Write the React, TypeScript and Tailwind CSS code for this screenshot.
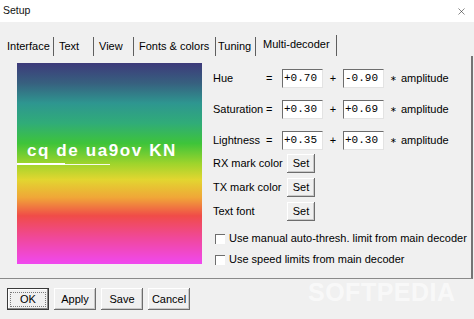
import { X } from "lucide-react";

const tabs = [
  { label: "Interface", w: "w-[50px]", pl: "pl-[3px]" },
  { label: "Text", w: "w-[40px]", pl: "pl-[5px]" },
  { label: "View", w: "w-[40px]", pl: "pl-[5px]" },
  { label: "Fonts & colors", w: "w-[82px]", pl: "pl-[5px]" },
  { label: "Tuning", w: "w-[40px]", pl: "pl-[2px]" },
];

const hsl = [
  { label: "Hue", a: "+0.70", b: "-0.90", mt: "" },
  { label: "Saturation", a: "+0.30", b: "+0.69", mt: "mt-[12px]" },
  { label: "Lightness", a: "+0.35", b: "+0.30", mt: "mt-[12px]" },
];

const colorRows = [
  { label: "RX mark color", mt: "mt-[4px]" },
  { label: "TX mark color", mt: "mt-[5px]" },
  { label: "Text font", mt: "mt-[5px]" },
];

function Field({ value }: { value: string }) {
  return (
    <div className="w-[41px] h-[19px] bg-white border-t border-l border-t-[#6d6d6d] border-l-[#6d6d6d] border-r border-b border-r-[#e3e3e3] border-b-[#e3e3e3] flex items-center pl-[1px] font-['Liberation_Mono',monospace] text-[11px]">
      {value}
    </div>
  );
}

function Btn({ label, w, h, focus }: { label: string; w: string; h: string; focus?: boolean }) {
  return (
    <button
      className={`${w} ${h} flex items-center justify-center bg-[#f0f0f0] ${
        focus
          ? "border border-[#3a3a3a] shadow-[inset_-1px_-1px_#8a8a8a,inset_1px_1px_#fff]"
          : "shadow-[inset_-1px_-1px_#6d6d6d,inset_1px_1px_#fff,inset_-2px_-2px_#c8c8c8]"
      }`}
    >
      {focus ? (
        <span className="border border-dotted border-[#7a7a7a] px-[9px] leading-[13px]">{label}</span>
      ) : (
        label
      )}
    </button>
  );
}

export default function App() {
  return (
    <div className="relative w-[474px] h-[319px] overflow-hidden bg-[#f0f0f0] flex flex-col font-['Liberation_Sans',Arial,sans-serif] text-[11px] text-black">
      <div className="h-[22px] bg-white flex items-center justify-between pl-[3px] pr-[7px]">
        <span className="text-[10.5px] text-[#111]">Setup</span>
        <X size={11} strokeWidth={1.2} className="text-[#222]" />
      </div>

      <div className="mt-[13px] h-[21px] flex items-end pl-[4px]">
        {tabs.map((t) => (
          <div key={t.label} className={`${t.w} ${t.pl} h-[19px] flex items-center border-r border-r-[#5e5e5e]`}>
            {t.label}
          </div>
        ))}
        <div className="w-[81px] h-[21px] pl-[7px] pb-[2px] flex items-center border-r border-r-[#5e5e5e]">
          Multi-decoder
        </div>
      </div>

      <div className="w-[473px] h-[223px] flex pl-[17px] pt-[7px] border-r-2 border-r-[#747474] border-b border-b-[#8a8a8a]">
        <div className="w-[185px] h-[201px] flex flex-col bg-[linear-gradient(to_bottom,#3d3a7a_0%,#37607f_10%,#2e9690_20%,#30ac78_30%,#3ec43a_40%,#9ed42c_50%,#e2d630_58%,#f0a638_67%,#f04c48_76%,#f0489a_87%,#f048f0_100%)]">
          <div className="mt-[78px] pl-[10px] h-[20px] leading-[20px] font-bold text-[17px] tracking-[1.6px] text-white">
            cq de ua9ov KN
          </div>
          <div className="mt-[2px] flex items-center">
            <div className="w-[48px] h-[2px] bg-white" />
            <div className="w-[45px] h-[1px] bg-white/90" />
          </div>
        </div>

        <div className="ml-[11px] pt-[6px] flex flex-col">
          {hsl.map((r) => (
            <div key={r.label} className={`${r.mt} h-[19px] flex items-center`}>
              <span className="w-[53px]">{r.label}</span>
              <span className="w-[16px]">=</span>
              <Field value={r.a} />
              <span className="w-[20px] text-center">+</span>
              <Field value={r.b} />
              <span className="ml-[6px] text-[8px]">∗</span>
              <span className="ml-[4px]">amplitude</span>
            </div>
          ))}

          {colorRows.map((r) => (
            <div key={r.label} className={`${r.mt} h-[19px] flex items-center`}>
              <span className="w-[74px]">{r.label}</span>
              <Btn label="Set" w="w-[28px]" h="h-[19px]" />
            </div>
          ))}

          <div className="mt-[10px] h-[15px] flex items-center">
            <div className="ml-[2px] w-[10px] h-[10px] bg-white border-t border-l border-t-[#6d6d6d] border-l-[#6d6d6d]" />
            <span className="ml-[4px]">Use manual auto-thresh. limit from main decoder</span>
          </div>
          <div className="mt-[6px] h-[15px] flex items-center">
            <div className="ml-[2px] w-[10px] h-[10px] bg-white border-t border-l border-t-[#6d6d6d] border-l-[#6d6d6d]" />
            <span className="ml-[4px]">Use speed limits from main decoder</span>
          </div>
        </div>
      </div>

      <div className="pt-[9px] pl-[7px] flex gap-[5px]">
        <Btn label="OK" w="w-[42px]" h="h-[22px]" focus />
        <Btn label="Apply" w="w-[42px]" h="h-[22px]" />
        <Btn label="Save" w="w-[42px]" h="h-[22px]" />
        <Btn label="Cancel" w="w-[42px]" h="h-[22px]" />
      </div>

      <div className="absolute left-[308px] top-[274px] text-[25px] font-bold tracking-[0.5px] text-white/60 select-none">
        SOFTPEDIA
      </div>
    </div>
  );
}
